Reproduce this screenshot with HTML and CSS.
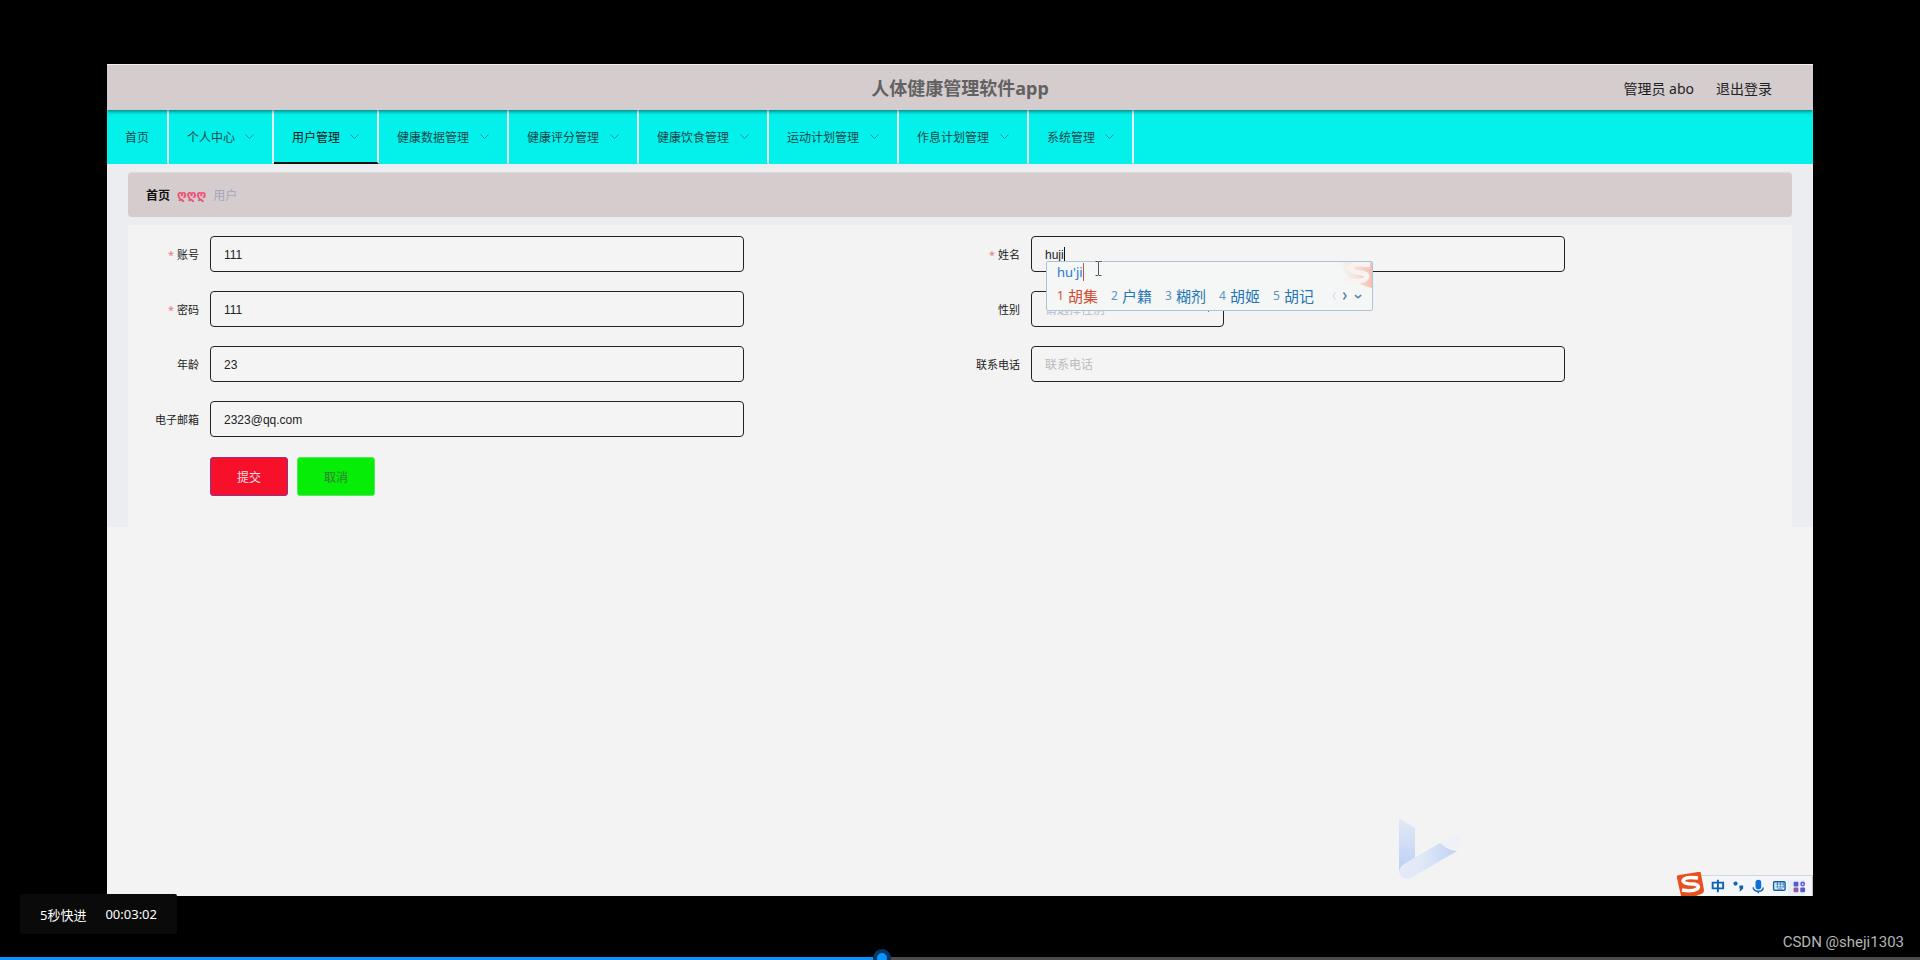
FILE: index.html
```html
<!DOCTYPE html>
<html lang="zh-CN">
<head>
<meta charset="utf-8">
<title>人体健康管理软件app</title>
<link rel="stylesheet" href="styles.css">
</head>
<body>
<main class="screen">
  <header class="header">
    <span></span>
    <h1 class="title">人体健康管理软件app</h1>
    <div class="account"><span>管理员 abo</span><a href="#">退出登录</a></div>
  </header>
  <nav class="nav">
    <a class="nav-item nav-home" href="#">首页</a>
    <a class="nav-item" href="#">个人中心<svg class="chev" viewBox="0 0 9 6"><path d="M.5 .5 4.500 4.500 8.500 .5"/></svg></a>
    <a class="nav-item active" href="#">用户管理<svg class="chev" viewBox="0 0 9 6"><path d="M.5 .5 4.500 4.500 8.500 .5"/></svg></a>
    <a class="nav-item wide" href="#">健康数据管理<svg class="chev" viewBox="0 0 9 6"><path d="M.5 .5 4.500 4.500 8.500 .5"/></svg></a>
    <a class="nav-item wide" href="#">健康评分管理<svg class="chev" viewBox="0 0 9 6"><path d="M.5 .5 4.500 4.500 8.500 .5"/></svg></a>
    <a class="nav-item wide" href="#">健康饮食管理<svg class="chev" viewBox="0 0 9 6"><path d="M.5 .5 4.500 4.500 8.500 .5"/></svg></a>
    <a class="nav-item wide" href="#">运动计划管理<svg class="chev" viewBox="0 0 9 6"><path d="M.5 .5 4.500 4.500 8.500 .5"/></svg></a>
    <a class="nav-item wide" href="#">作息计划管理<svg class="chev" viewBox="0 0 9 6"><path d="M.5 .5 4.500 4.500 8.500 .5"/></svg></a>
    <a class="nav-item" href="#">系统管理<svg class="chev" viewBox="0 0 9 6"><path d="M.5 .5 4.500 4.500 8.500 .5"/></svg></a>
  </nav>
  <section class="content">
    <div class="crumbs"><a href="#">首页</a><span class="sep">ღღღ</span><span class="here">用户</span></div>
    <form class="form">
      <div class="field"><label class="required" for="account">账号</label><input id="account" value="111"></div>
      <div class="field"><label class="required" for="name">姓名</label>
        <div class="ime-anchor">
          <input id="name" value="huji">
          <span class="caret"></span>
          <div class="ime">
            <div class="ime-logo"><svg viewBox="0 0 36 28">
              <defs><linearGradient id="fade"><stop offset="0" stop-color="#f7ded6" stop-opacity="0"/><stop offset="1" stop-color="#f4bfae"/></linearGradient></defs>
              <path d="M2 0H36V26Q10 20 2 0Z" fill="url(#fade)"/>
              <path d="M34 3Q15 0 14 6Q15 10 26 11Q35 13 28 18Q20 21 9 17" fill="none" stroke="#f8f3f2" stroke-width="5"/>
            </svg></div>
            <div class="ime-typed">hu'ji</div>
            <div class="ime-list">
              <span class="cand first"><i>1</i>胡集</span><span class="cand"><i>2</i>户籍</span><span class="cand"><i>3</i>糊剂</span><span class="cand"><i>4</i>胡姬</span><span class="cand"><i>5</i>胡记</span>
              <svg class="ime-arrows" viewBox="0 0 34 10"><path d="M4 1 1 5 4 9" stroke="#c3d3df"/><path d="M13 1 16 5 13 9" stroke="#4285ae" stroke-width="1.600"/><path d="M26 4 29.500 7 33 4" stroke="#4285ae" stroke-width="1.600"/></svg>
            </div>
            <svg class="pointer" viewBox="0 0 7 15"><path d="M.5 .5H3L3.500 1.500 4 .5H6.500M3.500 1V14M.5 14.500H3L3.500 13.500 4 14.500H6.500"/></svg>
          </div>
        </div>
      </div>
      <div class="field"><label class="required" for="password">密码</label><input id="password" value="111"></div>
      <div class="field"><label for="sex">性别</label>
        <div class="select"><select id="sex"><option>请选择性别</option></select><svg viewBox="0 0 9 6"><path d="M.5 .5 4.500 4.500 8.500 .5"/></svg></div>
      </div>
      <div class="field"><label for="age">年龄</label><input id="age" value="23"></div>
      <div class="field"><label for="phone">联系电话</label><input id="phone" placeholder="联系电话"></div>
      <div class="field"><label for="mail">电子邮箱</label><input id="mail" value="2323@qq.com"></div>
      <div class="actions"><button class="submit" type="button">提交</button><button class="cancel" type="button">取消</button></div>
    </form>
  </section>
  <svg class="bird" viewBox="0 0 64 64">
    <defs>
      <linearGradient id="b1" x2="0" y2="1"><stop offset="0" stop-color="#e4e9f5"/><stop offset="1" stop-color="#b9d0f5"/></linearGradient>
      <linearGradient id="b2"><stop offset="0" stop-color="#e6eaf7"/><stop offset=".4" stop-color="#e0e8f8"/><stop offset="1" stop-color="#bdd3f4"/></linearGradient>
    </defs>
    <path d="M0 0 16 10V44L0 54Z" fill="url(#b1)"/>
    <path d="M41 25Q50 15 60 18Q65 24 58 33Z" fill="#eff1f7"/>
    <path d="M41 25Q50 33 58 33L12 60Q5 63 1 57Q-2 51 5 46Z" fill="url(#b2)"/>
  </svg>
  <div class="tray">
    <svg class="sogou" viewBox="0 0 28 24"><path d="M1 6Q0 3 3 3L22 0Q25-1 25 2L28 18Q28 21 25 22L20 24H5Z" fill="#e8511f"/><path d="M22 6Q8 4 7 9Q8 12 17 12Q25 13 21 17Q16 20 6 18" fill="none" stroke="#fff" stroke-width="3.600"/></svg>
    <svg class="tools" viewBox="0 0 113 21">
      <g fill="none" stroke="#0c62b4" stroke-width="2"><path d="M11 7H22V13H11ZM16.500 4V17"/><circle cx="35" cy="8" r="1.200"/><path d="M53.500 12Q54 16 59 16Q64 16 64 12M59 16V18" stroke-width="1.500"/><rect x="75" y="6" width="12" height="9" rx="1" stroke-width="1.500"/></g>
      <path d="M39 10H43V13L40 16H39L40 13H39Z" fill="#0c62b4"/><rect x="56" y="4" width="6" height="10" rx="3" fill="#0c70d8"/>
      <path d="M77 8.500H86M77 11.500H86M79 6V12M82 6V12M85 6V12M79 13.500H84" stroke="#0c62b4" stroke-width=".7"/>
      <rect x="90" y="4" width="18" height="17" fill="#e6f1f5"/>
      <g fill="#5758d5"><rect x="96" y="6" width="5" height="5" rx="1"/><circle cx="105.500" cy="8.500" r="1.800" fill="none" stroke="#7652e5" stroke-width="1.600"/><rect x="96" y="12" width="5" height="5" rx="1" fill="#945a9e"/><rect x="103" y="12" width="5" height="5" rx="1"/></g>
    </svg>
  </div>
</main>
<div class="toast"><span>5秒快进</span><span>00:03:02</span></div>
<div class="watermark">CSDN @sheji1303</div>
<div class="progress"><div class="played" style="width:46%"><span class="thumb"></span></div></div>
</body>
</html>
```
FILE: styles.css
```css
* { box-sizing: border-box; }
body {
  margin: 0;
  min-height: 100vh;
  padding: 64px 107px;
  background: #000;
  font-family: "Noto Sans", "Noto Sans CJK SC", sans-serif;
  font-size: 12px;
  position: relative;
  overflow: hidden;
}
a { color: inherit; text-decoration: none; }
.screen {
  position: relative;
  min-height: calc(100vh - 128px);
  background: #f3f3f3;
}
.header {
  position: relative;
  z-index: 1;
  display: grid;
  grid-template-columns: 1fr auto 1fr;
  align-items: center;
  height: 46px;
  padding: 0 41px;
  background: #d5cccd;
  border-top: 1px solid #f0eeee;
  box-shadow: 0 1px 4px rgba(0, 0, 0, .6);
}
.title { margin: 0; font-size: 18px; line-height: 24px; color: #626162; }
.account { display: flex; justify-content: flex-end; gap: 22px; font-size: 14px; color: #222; }
.nav { display: flex; height: 54px; background: #04f1eb; }
.nav-item {
  display: flex;
  align-items: center;
  justify-content: space-between;
  width: 105px;
  padding: 1px 18px 0;
  border-right: 2px solid #e6eff1;
  border-bottom: 1px solid transparent;
  color: #17494b;
}
.nav-home { width: 62px; }
.wide { width: 130px; }
.active { border-bottom: 2px solid #111; color: #111; }
.chev { width: 9px; height: 6px; }
.chev path { fill: none; stroke: #1b86cf; }
.content { padding: 8px 21px 0; background: #ecedf1; }
.crumbs {
  display: flex;
  align-items: center;
  gap: 7px;
  height: 45px;
  margin-bottom: 8px;
  padding: 0 18px;
  background: #d5cccd;
  border-top: 1px solid #e0dadb;
  border-radius: 4px;
}
.crumbs a { font-weight: 600; color: #111; }
.sep { color: #ed5074; font-family: "DejaVu Sans", sans-serif; font-weight: 600; }
.here { color: #a3a7bb; }
.form {
  display: grid;
  grid-template-columns: 1fr 1fr;
  row-gap: 19px;
  padding: 11px 11px 31px;
  background: #f3f3f3;
}
.field { display: grid; grid-template-columns: 71px 65%; align-items: center; height: 36px; }
.field label { padding-right: 11px; text-align: right; font-size: 11px; color: #222; }
.required::before { content: "*"; margin-right: 3px; color: #e87b82; }
input, select {
  width: 100%;
  height: 36px;
  padding: 1px 13px 0;
  border: 1px solid #222;
  border-radius: 4px;
  background: #f4f4f4;
  color: #222;
  font: 12px "Liberation Sans", "Noto Sans CJK SC", sans-serif;
  outline: 0;
}
input::placeholder { color: #b9bbc1; }
.ime-anchor { position: relative; }
.caret { position: absolute; left: 33px; top: 11px; width: 1px; height: 14px; background: #111; }
.ime {
  position: absolute;
  z-index: 2;
  left: 15px;
  top: 25px;
  width: 327px;
  height: 50px;
  padding: 1px 10px;
  background: #f5f6f6;
  border: 1px solid #a9c6d8;
  border-radius: 2px;
  color: #2577b3;
}
.ime-logo { position: absolute; right: 0; top: 0; }
.ime-logo svg { display: block; width: 36px; height: 28px; }
.ime-typed { width: max-content; border-right: 1px solid #c6533d; font-size: 13px; line-height: 18px; color: #1e78cf; }
.ime-list { display: flex; align-items: center; gap: 14px; padding-top: 3px; font-size: 15px; line-height: 24px; }
.cand { display: flex; gap: 4px; width: 40px; white-space: nowrap; }
.cand i { font-style: normal; font-size: 12px; color: #5e94bd; }
.first, .first i { color: #d24a2d; }
.ime-arrows { width: 34px; height: 10px; fill: none; margin-left: 5px; }
.pointer { position: absolute; left: 48px; top: -1px; width: 7px; height: 15px; fill: none; stroke: #555; }
.select { position: relative; width: 193px; }
.select select { appearance: none; color: #b9bbc1; }
.select svg { position: absolute; right: 11px; top: 16px; width: 9px; height: 6px; fill: none; stroke: #555; }
.actions { grid-column: 1; display: flex; gap: 9px; padding: 1px 0 0 71px; grid-row: 5; }
.actions button { width: 78px; height: 39px; border-radius: 3px; font: inherit; }
.submit { background: #f71029; border: 1px solid #8c3191; color: #f9dfe2; }
.cancel { background: #06ed08; border: 1px solid #57e660; color: #397a3b; }
.bird { position: absolute; right: 350px; bottom: 14px; width: 64px; height: 64px; }
.tray { position: absolute; right: 0; bottom: 0; width: 113px; height: 21px; border-top: 1px solid #d2d8e2; border-right: 1px solid #b9bcd8; background: #f5f6f8; overflow: visible; }
.tools { display: block; width: 112px; height: 20px; }
.sogou { position: absolute; left: -24px; bottom: 0; width: 28px; height: 24px; }
.toast {
  position: absolute;
  left: 20px;
  bottom: 26px;
  display: flex;
  align-items: center;
  justify-content: space-between;
  min-width: 157px;
  height: 40px;
  padding: 0 20px;
  border-radius: 2px;
  background: #0a0a0a;
  color: #fff;
  font-size: 13px;
}
.watermark { position: absolute; right: 16px; bottom: 7px; color: #b5b5b5; font: 15px/22px Roboto, sans-serif; }
.progress { position: absolute; left: 0; right: 0; bottom: 0; height: 3px; background: #4d4b4b; }
.played { position: relative; height: 3px; background: #0b94ff; }
.thumb { position: absolute; right: -8px; top: -8px; width: 18px; height: 18px; border: 4px solid #063762; border-radius: 50%; background: #0b94ff; }
```
